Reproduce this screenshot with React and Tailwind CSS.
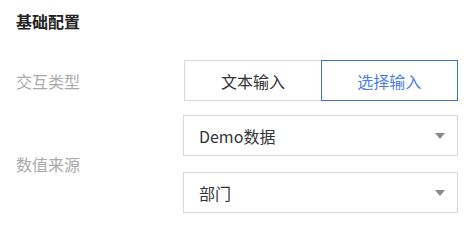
import React from "react";

const font = { fontFamily: '"Noto Sans CJK SC", "Noto Sans", sans-serif' };

function Caret() {
  return (
    <svg width="10" height="6" viewBox="0 0 10 6" className="shrink-0">
      <path d="M0 0 H10 L5 6 Z" fill="#8c8c8c" />
    </svg>
  );
}

function Select({ value }) {
  return (
    <div className="flex h-[41px] w-[275px] items-center justify-between border border-[#d9d9d9] bg-white pl-[15px] pr-[12px] text-[16px] text-[#333]">
      <span>{value}</span>
      <Caret />
    </div>
  );
}

export default function App() {
  return (
    <div className="h-[223px] w-[474px] bg-white px-4 pt-[9px]" style={font}>
      <div className="text-[16px] font-bold leading-6 text-[#222]">基础配置</div>
      <div className="mt-[27px] flex items-center">
        <div className="w-[169px] text-[16px] text-[#aaa]">交互类型</div>
        <div className="flex h-[41px] w-[275px] text-[16px]">
          <div className="flex flex-1 items-center justify-center border border-r-0 border-[#d9d9d9] text-[#333]">
            文本输入
          </div>
          <div className="flex flex-1 items-center justify-center border border-[#3b6fe0] text-[#4a7de6]">
            选择输入
          </div>
        </div>
      </div>
      <div className="mt-[14px] flex items-center">
        <div className="w-[169px] text-[16px] text-[#aaa]">数值来源</div>
        <div className="flex flex-col gap-4">
          <Select value="Demo数据" />
          <Select value="部门" />
        </div>
      </div>
    </div>
  );
}
